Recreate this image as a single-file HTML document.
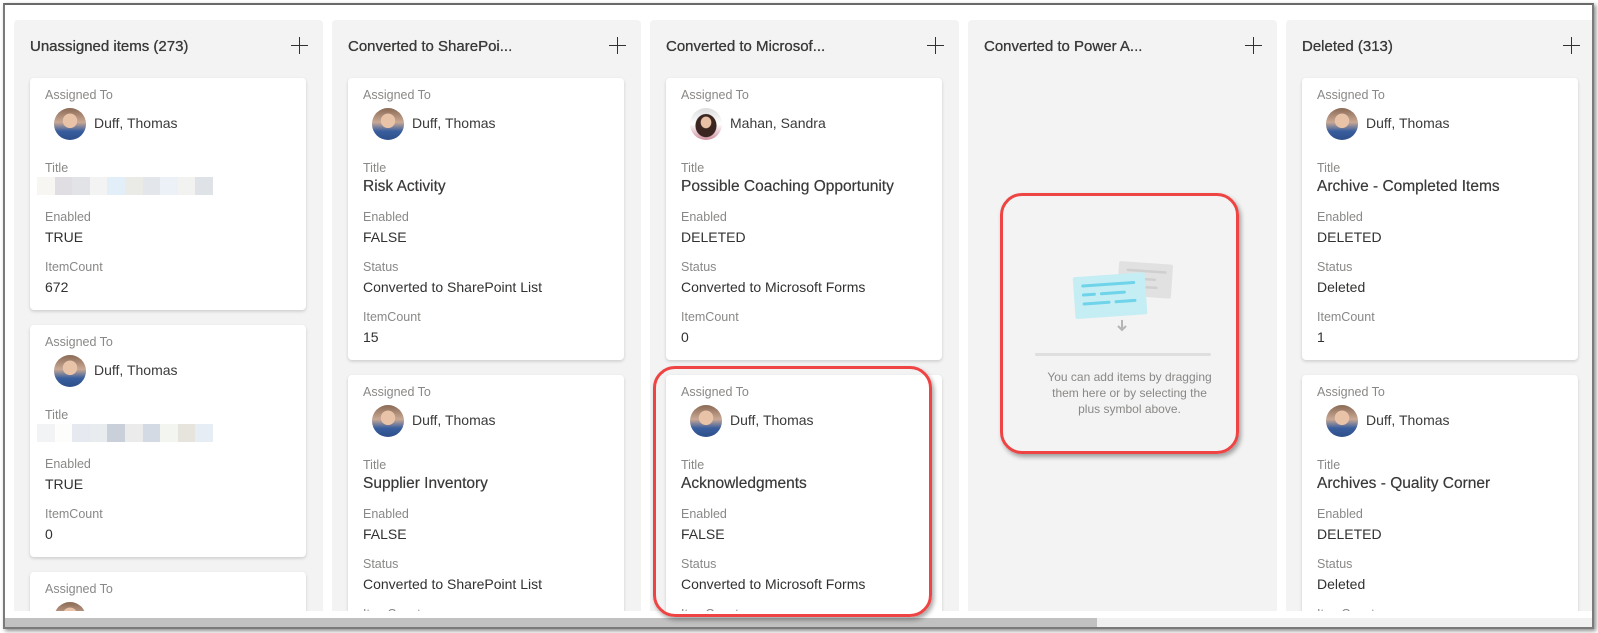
<!DOCTYPE html>
<html><head><meta charset="utf-8"><style>
*{box-sizing:border-box;margin:0;padding:0}
html,body{width:1598px;height:633px;overflow:hidden}
body{background:#fff;font-family:"Segoe UI","Liberation Sans",sans-serif;position:relative}
.frame{position:absolute;left:3px;top:3px;width:1591px;height:626px;border:2px solid #7a7a7a;border-top-color:#6a6a6a;box-shadow:2px 2px 4px rgba(0,0,0,.45);background:#fff;overflow:hidden}
.view{position:absolute;left:-5px;top:-5px;width:1600px;height:640px;overflow:hidden}
.clip{position:absolute;left:0;top:0;width:1600px;height:611px;overflow:hidden}
.col{position:absolute;top:20px;width:309px;height:620px;background:#f3f3f3;border-radius:4px}
.hdr{position:absolute;left:16px;top:18px;font-size:15px;color:#3b3a39;white-space:nowrap;text-shadow:0 0 .5px #3b3a39,0 0 .3px #3b3a39}
.plus{position:absolute;right:15px;top:17px;width:17px;height:17px}
.plus:before{content:"";position:absolute;left:8px;top:0;width:1.4px;height:17px;background:#323130}
.plus:after{content:"";position:absolute;top:8px;left:0;width:17px;height:1.4px;background:#323130}
.card{position:absolute;left:16px;width:276px;background:#fff;border-radius:4px;box-shadow:0 1.5px 3px rgba(0,0,0,.16)}
.l,.v,.nm,.av,.px{margin-top:2px}
.l,.v{position:absolute;left:15px;white-space:nowrap}
.l{font-size:12.5px;color:#8a8886}
.v{font-size:14px;color:#323130}
.v.t{font-size:15.5px;color:#3b3a39;text-shadow:0 0 .4px #3b3a39}
.av{position:absolute;left:24px;width:32px;height:32px;border-radius:50%;overflow:hidden;background:radial-gradient(circle at 50% 40%,#e9c3a8 0 28%,transparent 30%),linear-gradient(#8a6a55 0,#c9a894 45%,#3a5f9e 72%,#2d4f8a 100%)}
.av.f{background:radial-gradient(ellipse at 50% 45%,#e8c0a5 0 22%,transparent 25%),radial-gradient(ellipse at 50% 55%,#3a2520 0 45%,transparent 48%),linear-gradient(#ddd,#fff 50%,#d090a0)}
.nm{position:absolute;left:64px;font-size:14px;color:#3b3a39}
.px{position:absolute;left:7px;display:flex;height:18px}
.px span{width:17.6px;height:18px}
.red{position:absolute;border:3px solid #ee4444;border-radius:22px;box-shadow:2px 3px 5px rgba(0,0,0,.35)}
.tr{position:absolute;left:0;top:618px;width:1600px;height:10px;background:#f0f0f0}
.th{position:absolute;left:0;top:618px;width:1097px;height:10px;background:#c1c1c1}
.et{position:absolute;width:309px;text-align:center;font-size:12px;color:#8a8886;line-height:16px}
</style></head><body>
<div class="frame"><div class="view"><div class="clip">

<div class="col" style="left:14px"><div class="hdr">Unassigned items (273)</div><div class="plus"></div>
 <div class="card" style="top:58px;height:232px">
  <div class="l" style="top:8px">Assigned To</div><div class="av" style="top:28px"></div><div class="nm" style="top:35px">Duff, Thomas</div>
  <div class="l" style="top:81px">Title</div>
  <div class="px" style="top:97px"><span style="background:#f8f6f2"></span><span style="background:#e0dee2"></span><span style="background:#e2e3e7"></span><span style="background:#f3f3f3"></span><span style="background:#e2eef8"></span><span style="background:#eaeae7"></span><span style="background:#e3e6ea"></span><span style="background:#ecf1f8"></span><span style="background:#f2f3f0"></span><span style="background:#dfe2e6"></span></div>
  <div class="l" style="top:130px">Enabled</div><div class="v" style="top:149px">TRUE</div>
  <div class="l" style="top:180px">ItemCount</div><div class="v" style="top:199px">672</div>
 </div>
 <div class="card" style="top:305px;height:232px">
  <div class="l" style="top:8px">Assigned To</div><div class="av" style="top:28px"></div><div class="nm" style="top:35px">Duff, Thomas</div>
  <div class="l" style="top:81px">Title</div>
  <div class="px" style="top:97px"><span style="background:#f2f3f5"></span><span style="background:#fdfdfb"></span><span style="background:#e6e9f0"></span><span style="background:#e9ecee"></span><span style="background:#c9d0da"></span><span style="background:#ebebeb"></span><span style="background:#d4dae3"></span><span style="background:#f2f5f0"></span><span style="background:#e7e4de"></span><span style="background:#e6edf5"></span></div>
  <div class="l" style="top:130px">Enabled</div><div class="v" style="top:149px">TRUE</div>
  <div class="l" style="top:180px">ItemCount</div><div class="v" style="top:199px">0</div>
 </div>
 <div class="card" style="top:552px;height:200px">
  <div class="l" style="top:8px">Assigned To</div><div class="av" style="top:28px"></div>
 </div>
</div>

<div class="col" style="left:332px"><div class="hdr">Converted to SharePoi...</div><div class="plus"></div>
 <div class="card" style="top:58px;height:282px">
  <div class="l" style="top:8px">Assigned To</div><div class="av" style="top:28px"></div><div class="nm" style="top:35px">Duff, Thomas</div>
  <div class="l" style="top:81px">Title</div><div class="v t" style="top:98px">Risk Activity</div>
  <div class="l" style="top:130px">Enabled</div><div class="v" style="top:149px">FALSE</div>
  <div class="l" style="top:180px">Status</div><div class="v" style="top:199px">Converted to SharePoint List</div>
  <div class="l" style="top:230px">ItemCount</div><div class="v" style="top:249px">15</div>
 </div>
 <div class="card" style="top:355px;height:282px">
  <div class="l" style="top:8px">Assigned To</div><div class="av" style="top:28px"></div><div class="nm" style="top:35px">Duff, Thomas</div>
  <div class="l" style="top:81px">Title</div><div class="v t" style="top:98px">Supplier Inventory</div>
  <div class="l" style="top:130px">Enabled</div><div class="v" style="top:149px">FALSE</div>
  <div class="l" style="top:180px">Status</div><div class="v" style="top:199px">Converted to SharePoint List</div>
  <div class="l" style="top:230px">ItemCount</div>
 </div>
</div>

<div class="col" style="left:650px"><div class="hdr">Converted to Microsof...</div><div class="plus"></div>
 <div class="card" style="top:58px;height:282px">
  <div class="l" style="top:8px">Assigned To</div><div class="av f" style="top:28px"></div><div class="nm" style="top:35px">Mahan, Sandra</div>
  <div class="l" style="top:81px">Title</div><div class="v t" style="top:98px">Possible Coaching Opportunity</div>
  <div class="l" style="top:130px">Enabled</div><div class="v" style="top:149px">DELETED</div>
  <div class="l" style="top:180px">Status</div><div class="v" style="top:199px">Converted to Microsoft Forms</div>
  <div class="l" style="top:230px">ItemCount</div><div class="v" style="top:249px">0</div>
 </div>
 <div class="card" style="top:355px;height:282px">
  <div class="l" style="top:8px">Assigned To</div><div class="av" style="top:28px"></div><div class="nm" style="top:35px">Duff, Thomas</div>
  <div class="l" style="top:81px">Title</div><div class="v t" style="top:98px">Acknowledgments</div>
  <div class="l" style="top:130px">Enabled</div><div class="v" style="top:149px">FALSE</div>
  <div class="l" style="top:180px">Status</div><div class="v" style="top:199px">Converted to Microsoft Forms</div>
  <div class="l" style="top:230px">ItemCount</div>
 </div>
</div>

<div class="col" style="left:968px"><div class="hdr">Converted to Power A...</div><div class="plus"></div></div>
<svg style="position:absolute;left:1060px;top:255px" width="130" height="90" viewBox="0 0 130 90">
 <g transform="rotate(4 87 25)"><rect x="58" y="8" width="54" height="34" rx="2" fill="#e1e1e1"/>
 <rect x="66" y="15" width="40" height="2.5" rx="1" fill="#cfcfcf"/><rect x="66" y="23" width="30" height="2.5" rx="1" fill="#cfcfcf"/><rect x="76" y="31" width="22" height="2.5" rx="1" fill="#cfcfcf"/></g>
 <g transform="rotate(-4 45 40)"><rect x="14" y="20" width="72" height="42" rx="2" fill="#c4eef4"/>
 <rect x="22" y="28" width="54" height="3" rx="1.5" fill="#6fd3ea"/><rect x="22" y="37" width="14" height="3" rx="1.5" fill="#6fd3ea"/><rect x="40" y="37" width="26" height="3" rx="1.5" fill="#6fd3ea"/><rect x="22" y="46" width="28" height="3" rx="1.5" fill="#6fd3ea"/><rect x="54" y="46" width="22" height="3" rx="1.5" fill="#6fd3ea"/></g>
 <path d="M62 65v10M58 71l4 4 4-4" stroke="#b5b5b5" stroke-width="2" fill="none"/>
</svg>
<div style="position:absolute;left:1035px;top:353px;width:176px;height:3px;background:#dedede;border-radius:2px"></div>
<div class="et" style="top:369px;left:975px">You can add items by dragging<br>them here or by selecting the<br>plus symbol above.</div>
<div class="red" style="left:1000px;top:193px;width:239px;height:261px"></div>

<div class="col" style="left:1286px"><div class="hdr">Deleted (313)</div><div class="plus"></div>
 <div class="card" style="top:58px;height:282px">
  <div class="l" style="top:8px">Assigned To</div><div class="av" style="top:28px"></div><div class="nm" style="top:35px">Duff, Thomas</div>
  <div class="l" style="top:81px">Title</div><div class="v t" style="top:98px">Archive - Completed Items</div>
  <div class="l" style="top:130px">Enabled</div><div class="v" style="top:149px">DELETED</div>
  <div class="l" style="top:180px">Status</div><div class="v" style="top:199px">Deleted</div>
  <div class="l" style="top:230px">ItemCount</div><div class="v" style="top:249px">1</div>
 </div>
 <div class="card" style="top:355px;height:282px">
  <div class="l" style="top:8px">Assigned To</div><div class="av" style="top:28px"></div><div class="nm" style="top:35px">Duff, Thomas</div>
  <div class="l" style="top:81px">Title</div><div class="v t" style="top:98px">Archives - Quality Corner</div>
  <div class="l" style="top:130px">Enabled</div><div class="v" style="top:149px">DELETED</div>
  <div class="l" style="top:180px">Status</div><div class="v" style="top:199px">Deleted</div>
  <div class="l" style="top:230px">ItemCount</div>
 </div>
</div>
</div>

<div class="tr"></div><div class="th"></div>
<div class="red" style="left:653px;top:366px;width:279px;height:251px"></div>
</div></div>
</body></html>
